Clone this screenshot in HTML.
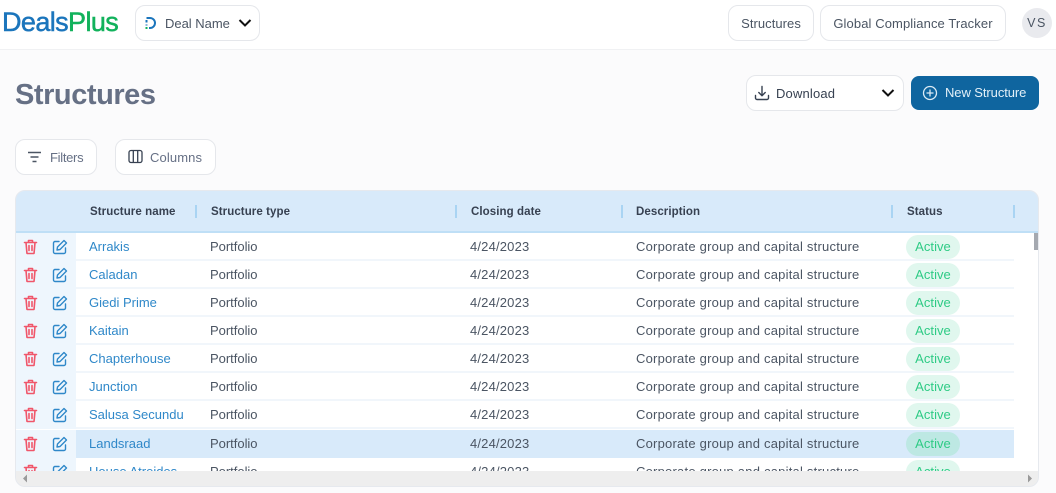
<!DOCTYPE html>
<html><head><meta charset="utf-8"><style>
*{box-sizing:border-box}
html,body{margin:0;padding:0}
body{width:1056px;height:493px;overflow:hidden;background:#fbfbfc;font-family:"Liberation Sans",sans-serif;position:relative;color:#374151}
.a{position:absolute;white-space:nowrap}
.top{left:0;top:0;width:1056px;height:50px;background:#fff;border-bottom:1px solid #f0f1f3}
.btn{position:absolute;background:#fff;border:1px solid #e5e7eb;border-radius:10px;font-size:13px;letter-spacing:.1px;color:#4b5563;display:flex;align-items:center;white-space:nowrap}
.table{left:15px;top:190px;width:1024px;height:297px;background:#f0f2f5;border:1px solid #e6e9ee;border-radius:10px;overflow:hidden}
.head{position:absolute;left:0;top:0;width:1022px;height:42px;background:#d8eafa;border-bottom:2px solid #bfdff6}
.th{position:absolute;top:14px;font-size:11.500px;font-weight:bold;letter-spacing:.08px;color:#374151;white-space:nowrap;line-height:14px}
.sep{position:absolute;top:14px;width:2px;height:13px;background:#a9d4f3}
.body{position:absolute;left:0;top:42px;width:1017px;height:238px;background:#fff;overflow:hidden}
.row{position:absolute;left:0;width:998px;height:28px;border-bottom:2px solid #f1f6fb;font-size:13px;letter-spacing:.1px;color:#4b5563}
.row.sel{background:#d8eafa;border-bottom:0}
.row span{position:absolute;top:6px;white-space:nowrap}
.ic{position:absolute;left:0;width:60px;top:0;height:28px;background:#eef6fd}
.ic svg{position:absolute;top:6px}
.n{left:73px;color:#2f88c9;letter-spacing:0}
.t{left:194px;letter-spacing:-.02px}.d{left:454px;letter-spacing:.17px}.c{left:620px;letter-spacing:.22px}
.row span.s{left:890px;top:2px;width:54px;height:24px;border-radius:12px;background:#e0f7ee;color:#2ecb85;text-align:center;line-height:24px;letter-spacing:.05px}
.sel span.s{background:#bde8e3}
.sb{position:absolute;left:1017px;top:42px;width:5px;height:238px;background:#fff}
.thumb{position:absolute;left:1018px;top:42px;width:4px;height:17px;background:#a5a9b0}
.hs{position:absolute;left:0;top:280px;width:1022px;height:15px;background:#eeeeee}
</style></head><body>
<svg width="0" height="0" style="position:absolute"><defs>
<g id="tr" fill="none" stroke="#f0566a" stroke-width="1.6" stroke-linecap="round" stroke-linejoin="round"><path d="M1.500 3.500h12M5.500 3.500V1.500h4v2M3 3.500l.9 10.200c0 .5.4.8.9.8h5.400c.5 0 .9-.3.9-.8L12 3.500M6 6.500v5M9 6.500v5"/></g>
<g id="ed" fill="none" stroke="#2f88c9" stroke-width="1.4" stroke-linecap="round" stroke-linejoin="round"><path d="M7 2.500H3a1.500 1.500 0 0 0-1.500 1.500v9A1.500 1.500 0 0 0 3 14.500h9a1.500 1.500 0 0 0 1.500-1.500V9"/><path d="M12 1.500l2.500 2.500-6.500 6.500-3 .5.500-3z"/></g>
</defs></svg>

<div class="a top"></div>
<div class="a" style="left:2px;top:4px;font-size:27px;letter-spacing:-.6px;line-height:36px;-webkit-text-stroke:.5px"><span style="color:#1b75bc">Deals</span><span style="color:#12b25c">Plus</span></div>

<div class="btn" style="left:135px;top:5px;width:125px;height:36px;padding-left:29px;color:#4b5563;letter-spacing:-.02px">Deal Name</div>
<svg class="a" style="left:145px;top:16px" width="12" height="15" viewBox="0 0 12 15" fill="none"><path d="M1.500 2H5a4.800 4.800 0 0 1 0 10H4" stroke="#1b75bc" stroke-width="2"/><path d="M1.500 4v2.500M1.500 8.500v1" stroke="#1b75bc" stroke-width="2"/><rect x=".5" y="11" width="2" height="2" fill="#12b25c"/></svg>
<svg class="a" style="left:238px;top:18px" width="14" height="10" viewBox="0 0 14 10" fill="none"><path d="M1.500 2l5.500 5.500L12.500 2" stroke="#111" stroke-width="2"/></svg>

<div class="btn" style="left:728px;top:5px;width:86px;height:36px;justify-content:center;letter-spacing:.05px">Structures</div>
<div class="btn" style="left:820px;top:5px;width:186px;height:36px;justify-content:center;letter-spacing:.1px">Global Compliance Tracker</div>
<div class="a" style="left:1022px;top:8px;width:30px;height:30px;border-radius:50%;background:#e9eaee;font-size:12.500px;letter-spacing:1.500px;text-align:center;line-height:30px;color:#4b5563">VS</div>

<div class="a" style="left:15px;top:76px;font-size:29px;font-weight:bold;letter-spacing:-.45px;line-height:38px;color:#667085">Structures</div>

<div class="btn" style="left:746px;top:75px;width:158px;height:36px;padding-left:29px;color:#374151;letter-spacing:.17px">Download</div>
<svg class="a" style="left:754px;top:85px" width="16" height="16" viewBox="0 0 16 16" fill="none" stroke="#374151" stroke-width="1.400" stroke-linecap="round" stroke-linejoin="round"><path d="M8 1.500v9M4.800 7.500L8 10.700l3.200-3.200M1.500 10.500v2.500a1.500 1.500 0 0 0 1.500 1.500h10a1.500 1.500 0 0 0 1.500-1.500v-2.500"/></svg>
<svg class="a" style="left:881px;top:88px" width="14" height="10" viewBox="0 0 14 10" fill="none"><path d="M1.500 2l5.500 5.500L12.500 2" stroke="#111" stroke-width="2"/></svg>

<div class="a" style="left:911px;top:76px;width:128px;height:34px;border-radius:8px;background:#0f659f;color:#e3f0f8;font-size:13px;letter-spacing:-.08px;line-height:34px;padding-left:34px">New Structure</div>
<svg class="a" style="left:922px;top:85px" width="16" height="16" viewBox="0 0 16 16" fill="none" stroke="#dcebf5" stroke-width="1.300" stroke-linecap="round"><circle cx="8" cy="8" r="6.500"/><path d="M8 5v6M5 8h6"/></svg>

<div class="btn" style="left:15px;top:139px;width:82px;height:36px;padding-left:34px;color:#667085;letter-spacing:-.3px">Filters</div>
<svg class="a" style="left:27px;top:151px" width="15" height="12" viewBox="0 0 15 12" fill="none" stroke="#4b5563" stroke-width="1.400"><path d="M1 1.500h13M3.500 6h8M5.500 10.500h4"/></svg>
<div class="btn" style="left:115px;top:139px;width:101px;height:36px;padding-left:34px;color:#667085;letter-spacing:.12px">Columns</div>
<svg class="a" style="left:128px;top:149px" width="15" height="15" viewBox="0 0 15 15" fill="none" stroke="#374151" stroke-width="1.300"><rect x="1" y="1.500" width="13" height="12" rx="2"/><path d="M5.300 1.500v12M9.700 1.500v12"/></svg>

<div class="a table">
<div class="head">
<div class="th" style="left:74px">Structure name</div><div class="sep" style="left:179px"></div>
<div class="th" style="left:195px">Structure type</div><div class="sep" style="left:439px"></div>
<div class="th" style="left:455px">Closing date</div><div class="sep" style="left:605px"></div>
<div class="th" style="left:620px">Description</div><div class="sep" style="left:875px"></div>
<div class="th" style="left:891px">Status</div><div class="sep" style="left:997px"></div>
</div>
<div class="body">
<div class="row" style="top:0"><div class="ic"><svg style="left:7px" width="16" height="16"><use href="#tr"/></svg><svg style="left:36px" width="16" height="16"><use href="#ed"/></svg></div><span class="n">Arrakis</span><span class="t">Portfolio</span><span class="d">4/24/2023</span><span class="c">Corporate group and capital structure</span><span class="s">Active</span></div>
<div class="row" style="top:28px"><div class="ic"><svg style="left:7px" width="16" height="16"><use href="#tr"/></svg><svg style="left:36px" width="16" height="16"><use href="#ed"/></svg></div><span class="n">Caladan</span><span class="t">Portfolio</span><span class="d">4/24/2023</span><span class="c">Corporate group and capital structure</span><span class="s">Active</span></div>
<div class="row" style="top:56px"><div class="ic"><svg style="left:7px" width="16" height="16"><use href="#tr"/></svg><svg style="left:36px" width="16" height="16"><use href="#ed"/></svg></div><span class="n">Giedi Prime</span><span class="t">Portfolio</span><span class="d">4/24/2023</span><span class="c">Corporate group and capital structure</span><span class="s">Active</span></div>
<div class="row" style="top:84px"><div class="ic"><svg style="left:7px" width="16" height="16"><use href="#tr"/></svg><svg style="left:36px" width="16" height="16"><use href="#ed"/></svg></div><span class="n">Kaitain</span><span class="t">Portfolio</span><span class="d">4/24/2023</span><span class="c">Corporate group and capital structure</span><span class="s">Active</span></div>
<div class="row" style="top:112px"><div class="ic"><svg style="left:7px" width="16" height="16"><use href="#tr"/></svg><svg style="left:36px" width="16" height="16"><use href="#ed"/></svg></div><span class="n">Chapterhouse</span><span class="t">Portfolio</span><span class="d">4/24/2023</span><span class="c">Corporate group and capital structure</span><span class="s">Active</span></div>
<div class="row" style="top:140px"><div class="ic"><svg style="left:7px" width="16" height="16"><use href="#tr"/></svg><svg style="left:36px" width="16" height="16"><use href="#ed"/></svg></div><span class="n">Junction</span><span class="t">Portfolio</span><span class="d">4/24/2023</span><span class="c">Corporate group and capital structure</span><span class="s">Active</span></div>
<div class="row" style="top:168px"><div class="ic"><svg style="left:7px" width="16" height="16"><use href="#tr"/></svg><svg style="left:36px" width="16" height="16"><use href="#ed"/></svg></div><span class="n">Salusa Secundu</span><span class="t">Portfolio</span><span class="d">4/24/2023</span><span class="c">Corporate group and capital structure</span><span class="s">Active</span></div>
<div class="row sel" style="top:197px"><div class="ic"><svg style="left:7px" width="16" height="16"><use href="#tr"/></svg><svg style="left:36px" width="16" height="16"><use href="#ed"/></svg></div><span class="n">Landsraad</span><span class="t">Portfolio</span><span class="d">4/24/2023</span><span class="c">Corporate group and capital structure</span><span class="s">Active</span></div>
<div class="row" style="top:225px"><div class="ic"><svg style="left:7px" width="16" height="16"><use href="#tr"/></svg><svg style="left:36px" width="16" height="16"><use href="#ed"/></svg></div><span class="n">House Atreides</span><span class="t">Portfolio</span><span class="d">4/24/2023</span><span class="c">Corporate group and capital structure</span><span class="s">Active</span></div>
</div>
<div class="sb"></div><div class="thumb"></div>
<div class="hs"></div>
<svg class="a" style="left:6px;top:283px" width="6" height="9"><path d="M5 0.500v8L1 4.500z" fill="#9a9a9a"/></svg>
<svg class="a" style="left:1011px;top:283px" width="6" height="9"><path d="M1 0.500v8l4-4z" fill="#9a9a9a"/></svg>
</div>
</body></html>
